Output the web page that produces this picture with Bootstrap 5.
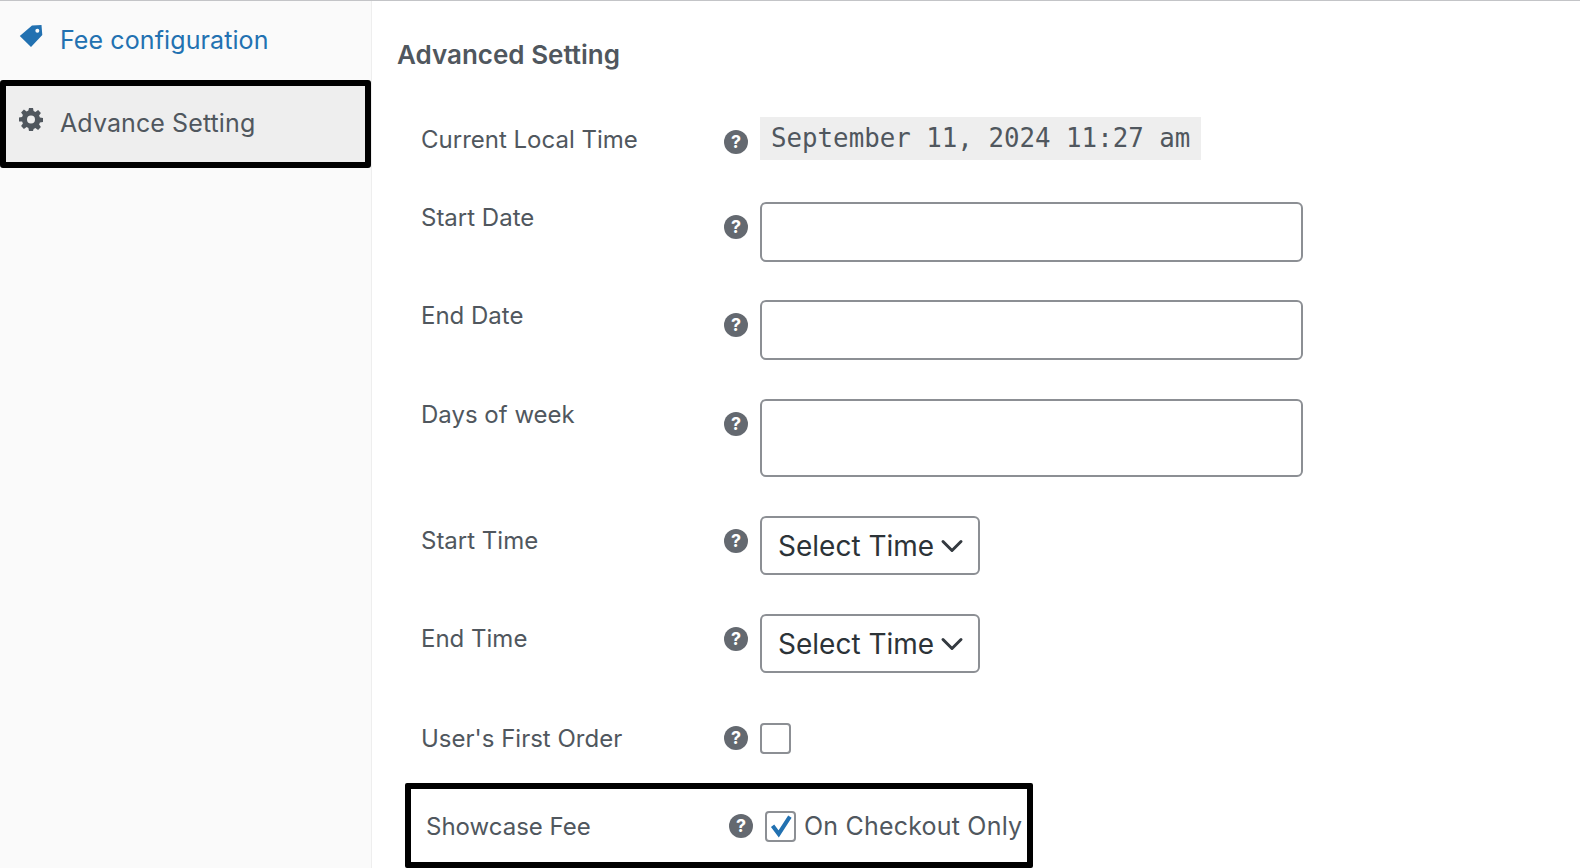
<!DOCTYPE html>
<html lang="en">
<head>
<meta charset="utf-8">
<title>Advanced Setting</title>
<link href="https://cdn.jsdelivr.net/npm/bootstrap@5.3.0/dist/css/bootstrap.min.css" rel="stylesheet">
<style>
html,body{height:868px;overflow:hidden;background:#fff}
body{font-family:Inter,"Liberation Sans",sans-serif;color:#50575e}
.shell{height:868px;border-top:1px solid #c3c4c7}
.side{width:372px;flex:none;background:#fafafa;border-right:1px solid #eee;padding-top:0}
.side-link{display:flex;align-items:center;height:79px;padding-left:19px;font-size:25px;color:#2271b1;text-decoration:none;letter-spacing:.1px}
.side-link svg{width:24px;height:24px;margin-right:17px;flex:none;position:relative;top:-5px}
.side-link.on{height:88px;background:#eee;color:#50575e;border:6px solid #000;border-radius:3px;padding-left:13px}
.main{flex:1;padding:36px 0 0 397px;margin-left:-372px}
.main{margin-left:0;padding-left:25px}
.ttl{font-size:26px;font-weight:600;color:#50575e;line-height:36px;margin:0 0 44px}
.setrow{display:flex;align-items:flex-start;padding-left:24px}
.lab{width:303px;flex:none;font-size:24px;line-height:32px;color:#50575e;margin:0}
.hlp{width:24px;height:24px;border-radius:50%;background:#646970;color:#fff;font-size:18px;font-weight:700;line-height:24px;text-align:center;flex:none;margin-right:12px}
.clock{font-family:"DejaVu Sans Mono",monospace;font-size:25.8px;line-height:43px;height:43px;background:#eee;padding:0 11px;color:#50575e;display:block}
.txt{width:543px;height:60px;border:2px solid #8c8f94;border-radius:6px;background:#fff;box-shadow:none}
.tall{height:78px}
.sel{width:220px;height:59px;border:2px solid #8c8f94;border-radius:6px;font-size:28px;line-height:1;color:#2c3338;padding:0 0 0 16px;font-family:inherit;background-size:24px 24px;background-position:right 14px center;box-shadow:none}
.chk{width:31px;height:31px;margin:0;border:2px solid #8c8f94;border-radius:8px;flex:none;float:none}
.chk:checked{background-color:#fff;border-color:#8c8f94;background-size:30px 30px;background-image:url("data:image/svg+xml,%3Csvg xmlns='http://www.w3.org/2000/svg' viewBox='0 0 30 30'%3E%3Cpath d='M7 14l6 8L24 5' fill='none' stroke='%232271b1' stroke-width='4'/%3E%3C/svg%3E")}
.r1{margin-bottom:42px}.r2{margin-bottom:38px}.r3{margin-bottom:39px}.r4{margin-bottom:50px}
.lab-a{padding-top:7px}.hlp-a{margin-top:13px}
.lab-b{padding-top:9px}.hlp-b{margin-top:14px}
.lab-c{padding-top:0}.hlp-c{margin-top:3px}
.mark-box{width:628px;height:85px;border:6px solid #000;border-radius:2px;margin:-22px 0 0 -1px;padding:22px 0 0 15px;display:flex;align-items:flex-start;box-sizing:border-box}
.mark-box .lab{width:303px}
.opt{font-size:25px;line-height:31px;color:#50575e;margin-left:8px;letter-spacing:.2px;white-space:nowrap}
</style>
</head>
<body>
<div class="shell d-flex">
  <nav class="side">
    <a class="side-link" href="#">
      <svg viewBox="0 0 24 24"><path fill="#2271b1" d="M13 1.5l9.5-.5.8 10L12 23 .8 12zm5.300 3.200a2 2 0 1 0 .1 4 2 2 0 0 0-.1-4z"/></svg>
      Fee configuration</a>
    <a class="side-link on" href="#">
      <svg viewBox="0 0 24 24"><path fill="#50575e" fill-rule="evenodd" d="M10 1h4l.6 3.100 1.800.8 2.700-1.800 2.800 2.800-1.800 2.700.8 1.800 3.100.6v4l-3.100.6-.8 1.800 1.800 2.700-2.800 2.800-2.700-1.800-1.800.8L14 24h-4l-.6-3.100-1.800-.8-2.700 1.800-2.800-2.800 1.800-2.700-.8-1.800L0 14.500v-4l3.100-.6.8-1.800-1.800-2.700 2.800-2.800 2.700 1.800 1.800-.8zm2 7.500a4 4 0 1 0 0 8 4 4 0 0 0 0-8z"/></svg>
      Advance Setting</a>
  </nav>
  <main class="main">
    <h2 class="ttl">Advanced Setting</h2>
    <div class="setrow r1"><p class="lab lab-a">Current Local Time</p><span class="hlp hlp-a">?</span><code class="clock">September 11, 2024 11:27 am</code></div>
    <div class="setrow r2"><label class="lab" for="f1">Start Date</label><span class="hlp hlp-a">?</span><input id="f1" class="form-control txt" type="text"></div>
    <div class="setrow r3"><label class="lab" for="f2">End Date</label><span class="hlp hlp-a">?</span><input id="f2" class="form-control txt" type="text"></div>
    <div class="setrow r3"><label class="lab" for="f3">Days of week</label><span class="hlp hlp-a">?</span><input id="f3" class="form-control txt tall" type="text"></div>
    <div class="setrow r3"><label class="lab lab-b" for="f4">Start Time</label><span class="hlp hlp-a">?</span><select id="f4" class="form-select sel"><option>Select Time</option></select></div>
    <div class="setrow r4"><label class="lab lab-b" for="f5">End Time</label><span class="hlp hlp-a">?</span><select id="f5" class="form-select sel"><option>Select Time</option></select></div>
    <div class="setrow r4"><label class="lab lab-c" for="f6">User's First Order</label><span class="hlp hlp-c">?</span><input id="f6" class="form-check-input chk" type="checkbox"></div>
    <div class="setrow" style="padding-left:9px"><div class="mark-box"><label class="lab" for="f7">Showcase Fee</label><span class="hlp hlp-c">?</span><input id="f7" class="form-check-input chk" type="checkbox" checked><span class="opt">On Checkout Only</span></div></div>
  </main>
</div>
</body>
</html>
